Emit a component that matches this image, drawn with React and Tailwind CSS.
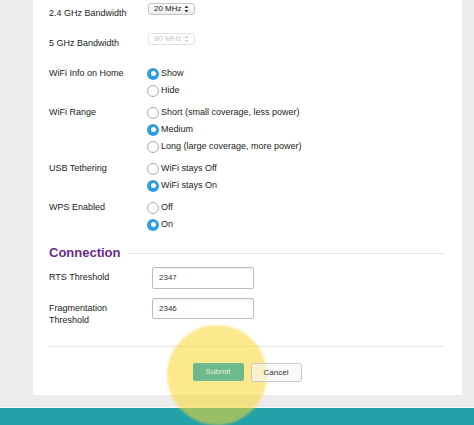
import React from "react";

const Arrows = ({ color }) => (
  <svg width="5" height="8" viewBox="0 0 5 8" className="shrink-0">
    <path d="M2.5 0.5 L4.5 3 H0.5 Z" fill={color} />
    <path d="M2.5 7.5 L4.5 5 H0.5 Z" fill={color} />
  </svg>
);

const Select = ({ value, disabled }) => (
  <div
    className={`ml-[1px] flex h-[12px] w-[47px] items-center justify-between rounded-[3px] border pl-[5px] pr-[5px] text-[8px] leading-none ${
      disabled
        ? "border-[#e2e2e2] bg-white text-[#c9c9c9]"
        : "border-[#c6c6c6] bg-gradient-to-b from-white to-[#ececec] text-[#222]"
    }`}
  >
    <span>{value}</span>
    <Arrows color={disabled ? "#cfcfcf" : "#333"} />
  </div>
);

const Radio = ({ label, checked }) => (
  <div className="flex h-[17px] items-center">
    {checked ? (
      <span className="flex h-[12px] w-[12px] items-center justify-center rounded-full bg-[#2f9ee6]">
        <span className="h-[5px] w-[5px] rounded-full bg-white" />
      </span>
    ) : (
      <span className="h-[12px] w-[12px] rounded-full border border-[#ababab] bg-white" />
    )}
    <span className="ml-[2px] text-[9px] text-[#222]">{label}</span>
  </div>
);

const RadioRow = ({ label, options, selected }) => (
  <div className="mb-[5px] flex">
    <div className="w-[98px] text-[9px] leading-[17px] text-[#222]">{label}</div>
    <div className="flex flex-col">
      {options.map((o) => (
        <Radio key={o} label={o} checked={o === selected} />
      ))}
    </div>
  </div>
);

const App = () => {
  return (
    <div className="relative flex h-[425px] w-[474px] flex-col overflow-hidden bg-[#ececec] font-['Liberation_Sans',Arial,sans-serif]">
      <div className="flex h-[395px] shrink-0">
        <div className="w-[33px] bg-[#ececec]" />

        {/* white panel */}
        <div className="flex flex-1 flex-col bg-white pl-[16px] pr-[17px] pt-[3px]">
          {/* bandwidth */}
          <div className="flex h-[30px] items-start">
            <div className="mt-[5px] w-[98px] text-[9px] leading-[11px] text-[#222]">2.4 GHz Bandwidth</div>
            <Select value="20 MHz" />
          </div>
          <div className="flex h-[32px] items-start">
            <div className="mt-[5px] w-[98px] text-[9px] leading-[11px] text-[#222]">5 GHz Bandwidth</div>
            <Select value="80 MHz" disabled />
          </div>

          <RadioRow label="WiFi Info on Home" options={["Show", "Hide"]} selected="Show" />
          <RadioRow
            label="WiFi Range"
            options={["Short (small coverage, less power)", "Medium", "Long (large coverage, more power)"]}
            selected="Medium"
          />
          <RadioRow label="USB Tethering" options={["WiFi stays Off", "WiFi stays On"]} selected="WiFi stays On" />
          <RadioRow label="WPS Enabled" options={["Off", "On"]} selected="On" />

          {/* Connection */}
          <div className="mt-[7px] flex items-center">
            <h2 className="text-[13px] font-bold leading-[16px] text-[#6a2a8c]">Connection</h2>
            <div className="ml-[7px] flex-1 border-t border-[#e6e6e6]" />
          </div>

          <div className="mt-[6px] flex items-center">
            <div className="w-[103px] text-[9px] text-[#222]">RTS Threshold</div>
            <div className="flex h-[22px] w-[102px] items-center rounded-[2px] border border-[#bdbdbd] bg-white pl-[6px] text-[8px] text-[#333] shadow-[inset_0_1px_1px_rgba(0,0,0,0.06)]">
              2347
            </div>
          </div>

          <div className="mt-[9px] flex items-start">
            <div className="mt-[4px] w-[103px] text-[9px] leading-[12px] text-[#222]">
              Fragmentation
              <br />
              Threshold
            </div>
            <div className="flex h-[21px] w-[102px] items-center rounded-[2px] border border-[#bdbdbd] bg-white pl-[6px] text-[8px] text-[#333] shadow-[inset_0_1px_1px_rgba(0,0,0,0.06)]">
              2346
            </div>
          </div>

          <div className="mt-[20px] border-t border-[#e8e8e8]" />

          {/* buttons */}
          <div className="relative z-10 mt-[16px] flex justify-center gap-[7px]">
            <button className="flex h-[18px] w-[51px] items-center justify-center rounded-[2px] bg-[#6fba8c] text-[8px] text-[#e4f2dc]">
              Submit
            </button>
            <button className="flex h-[19px] w-[51px] items-center justify-center rounded-[3px] border border-[#c8c8c8] bg-[#f6f6f6]/60 text-[8px] text-[#333]">
              Cancel
            </button>
          </div>
        </div>

        <div className="w-[12px] bg-[#ececec]" />
      </div>

      {/* footer */}
      <div className="h-[12px] shrink-0 bg-[#ececec]" />
      <div className="h-[1px] shrink-0 bg-[#f7f7f7]" />
      <div className="flex-1 bg-[#22a1a8]" />

      {/* touch indicator */}
      <div className="absolute left-[167px] top-[325px] h-[100px] w-[100px] rounded-full bg-[rgba(250,215,50,0.55)] blur-[1px]" />
    </div>
  );
};

export default App;
